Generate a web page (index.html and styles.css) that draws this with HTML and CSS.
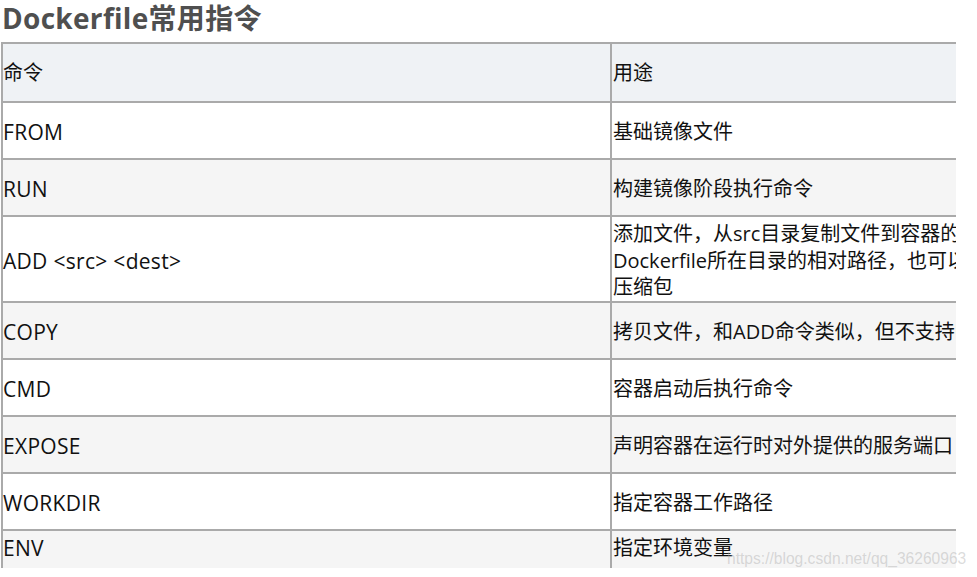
FILE: index.html
```html
<!DOCTYPE html>
<html lang="zh-CN">
<head>
<meta charset="utf-8">
<title>Dockerfile常用指令</title>
<link rel="stylesheet" href="styles.css">
</head>
<body>
<div class="page">
  <h2 class="title">Dockerfile常用指令</h2>
  <table class="cmd-table">
    <colgroup><col class="c1"><col class="c2"></colgroup>
    <thead>
      <tr class="head"><td>命令</td><td>用途</td></tr>
    </thead>
    <tbody>
      <tr><td>FROM</td><td>基础镜像文件</td></tr>
      <tr class="alt"><td>RUN</td><td>构建镜像阶段执行命令</td></tr>
      <tr><td>ADD &lt;src&gt; &lt;dest&gt;</td><td>添加文件，从src目录复制文件到容器的dest。其中src可以是<br>Dockerfile所在目录的相对路径，也可以是一个URL，还可以是一个<br>压缩包</td></tr>
      <tr class="alt"><td>COPY</td><td>拷贝文件，和ADD命令类似，但不支持URL和压缩包</td></tr>
      <tr><td>CMD</td><td>容器启动后执行命令</td></tr>
      <tr class="alt"><td>EXPOSE</td><td>声明容器在运行时对外提供的服务端口</td></tr>
      <tr><td>WORKDIR</td><td>指定容器工作路径</td></tr>
      <tr class="alt last"><td>ENV</td><td>指定环境变量</td></tr>
    </tbody>
  </table>
</div>
<div class="watermark">https://blog.csdn.net/qq_36260963</div>
</body>
</html>
```

FILE: styles.css
```css
html, body {
  margin: 0;
  padding: 0;
  background: #ffffff;
}

body {
  font-family: "Open Sans", "Noto Sans CJK SC", sans-serif;
  position: relative;
  width: 977px;
  height: 577px;
  overflow: hidden;
}

.page {
  width: 956px;
  height: 568px;
  overflow: hidden;
  padding-left: 1px;
  box-sizing: border-box;
}

.title {
  margin: 0;
  height: 42px;
  padding-left: 1px;
  font-size: 28px;
  line-height: 36px;
  font-weight: 700;
  letter-spacing: 0.3px;
  color: #4f4f4f;
  white-space: nowrap;
}

.cmd-table {
  border-collapse: separate;
  border-spacing: 0;
  table-layout: fixed;
  width: 1300px;
  border-top: 2px solid #aaaaaa;
  border-left: 2px solid #aaaaaa;
  font-size: 20px;
  line-height: 26.5px;
  color: #111111;
}

.c1 { width: 609px; }
.c2 { width: 691px; }

.cmd-table td {
  box-sizing: border-box;
  height: 57px;
  padding: 4px 1px 0;
  border-right: 2px solid #aaaaaa;
  border-bottom: 2px solid #aaaaaa;
  vertical-align: middle;
  white-space: nowrap;
  background: #ffffff;
}

.cmd-table tbody td:first-child {
  padding-left: 0;
  font-size: 21px;
  letter-spacing: 0.3px;
}

.cmd-table .head td {
  height: 59px;
  padding: 3px 1px 1px;
  background: #eff2f5;
}

.cmd-table .head td:first-child {
  padding-left: 0;
}

.cmd-table .alt td {
  background: #f5f5f5;
}

.cmd-table .last td {
  height: 40px;
  padding-top: 0;
  padding-bottom: 2px;
}

.watermark {
  position: absolute;
  left: 727px;
  top: 549px;
  font-family: "Liberation Sans", Arial, sans-serif;
  font-size: 15.6px;
  line-height: 20px;
  color: rgba(170, 170, 170, 0.42);
  white-space: nowrap;
}
```
